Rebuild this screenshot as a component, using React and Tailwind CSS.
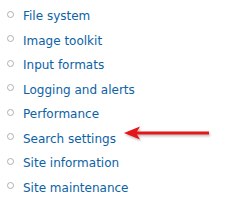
import React from "react";

const ITEMS = [
  "File system",
  "Image toolkit",
  "Input formats",
  "Logging and alerts",
  "Performance",
  "Search settings",
  "Site information",
  "Site maintenance",
];

function Arrow() {
  return (
    <svg width="90" height="18" viewBox="0 0 90 18" className="absolute left-[122px] top-[-3px]">
      <defs>
        <filter id="sh" x="-10%" y="-50%" width="120%" height="200%">
          <feDropShadow dx="1" dy="1.5" stdDeviation="1" floodColor="#000" floodOpacity="0.3" />
        </filter>
      </defs>
      <path d="M2 9 L18 2.5 L15 7.5 L87 7.5 L87 10.5 L15 10.5 L18 15.5 Z" fill="#e3141b" filter="url(#sh)" />
    </svg>
  );
}

export default function App() {
  return (
    <div className="w-[227px] h-[208px] bg-white pt-[4px] font-['DejaVu_Sans',Verdana,sans-serif]">
      <ul className="flex flex-col">
        {ITEMS.map((item) => (
          <li key={item} className="relative flex items-center h-[24.5px] pl-[7px]">
            <span className="w-[7px] h-[7px] rounded-full border border-[#b0b0b0] mr-[9px] -mt-[4px] shrink-0" />
            <span className="text-[12px] text-[#0b62a6] leading-none">{item}</span>
            {item === "Search settings" && <Arrow />}
          </li>
        ))}
      </ul>
    </div>
  );
}
